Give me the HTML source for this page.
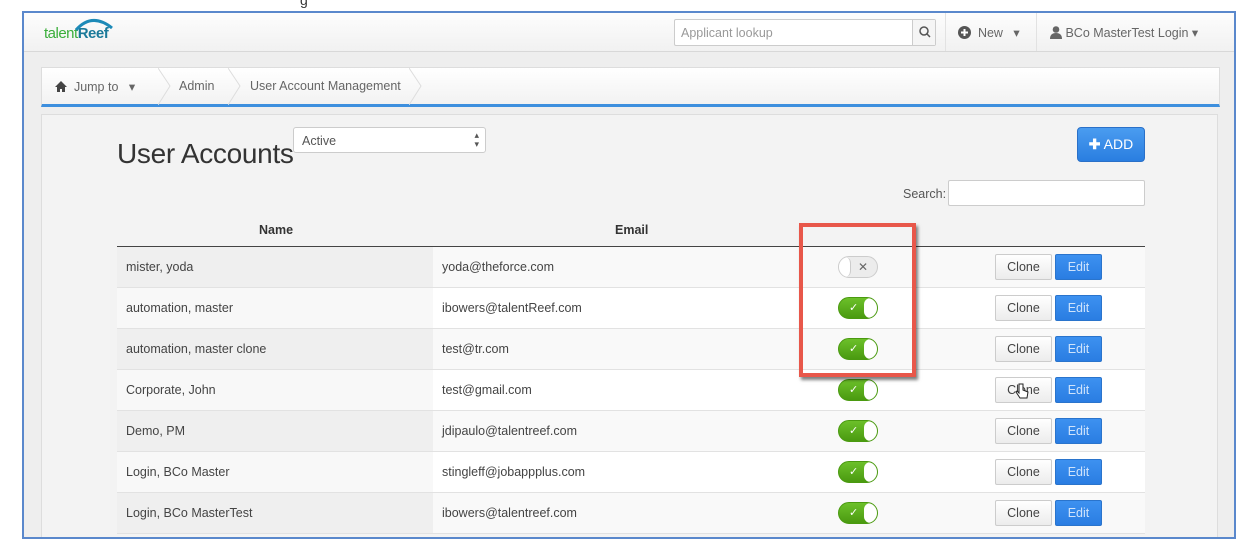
<!DOCTYPE html>
<html><head><meta charset="utf-8"><style>
*{box-sizing:border-box;margin:0;padding:0}
body{width:1252px;height:553px;background:#fff;font-family:"Liberation Sans",sans-serif;position:relative;overflow:hidden;color:#333}
.a{position:absolute}
#frame{left:22px;top:11px;width:1214px;height:528px;border:2px solid #5a88cc;background:#eeeeee;overflow:hidden}
#nav{left:0;top:0;width:1210px;height:39px;background:linear-gradient(#fdfdfd,#f1f1f1);border-bottom:1px solid #d8d8d8}
.logo{left:20px;top:12px;font-size:15px;letter-spacing:-0.5px}
.search{left:650px;top:6px;width:262px;height:27px;border:1px solid #ccc;background:#fff;border-radius:2px}
.search span{position:absolute;left:6px;top:6px;font-size:12.5px;color:#999}
.search .btn{position:absolute;right:0;top:0;width:23px;height:25px;border-left:1px solid #ccc;background:#f5f5f5}
.navitem{font-size:12.5px;color:#666;top:12px}
.sep{top:0;width:1px;height:38px;background:#e2e2e2}
#bc{left:17px;top:54px;width:1179px;height:40px;background:linear-gradient(#fff,#f2f2f2);border:1px solid #ddd;border-bottom:3px solid #3d8fde}
.bct{font-size:12.5px;color:#666;top:11px}
.chev{top:0;width:14px;height:37px}
#panel{left:17px;top:101px;width:1177px;height:430px;background:#f3f3f3;border:1px solid #ddd}
h1{position:absolute;left:75px;top:23px;font-size:28px;font-weight:normal;color:#333;letter-spacing:-0.3px}
.sel{left:251px;top:12px;width:193px;height:26px;background:#fff;border:1px solid #ccc;border-radius:3px;font-size:12.5px;color:#555;padding:6px 8px}
.add{left:1035px;top:12px;width:68px;height:35px;background:linear-gradient(#4a9cf0,#2a7ee0);border:1px solid #2a70c8;border-radius:4px;color:#fff;font-size:14px;text-align:center;line-height:33px}
.srch{left:861px;top:72px;font-size:12.5px;color:#555}
.sbox{left:906px;top:65px;width:197px;height:26px;background:#fff;border:1px solid #ccc;border-radius:2px}
.th{top:108px;font-size:12.5px;font-weight:bold;color:#333}
.hline{left:75px;top:131px;width:1028px;height:1px;background:#444}
.row{left:75px;width:1028px;height:41px;border-bottom:1px solid #e2e2e2}
.row .n{position:absolute;left:0;top:0;width:316px;height:40px}
.row .t1{position:absolute;left:9px;top:13px;font-size:12.5px;color:#444}
.row .t2{position:absolute;left:325px;top:13px;font-size:12.5px;color:#444}
.tg{position:absolute;left:721px;top:9px;width:40px;height:22px;border-radius:11px;overflow:hidden}
.on{background:linear-gradient(#6cc02a,#4a9a10);border:1px solid #4a9a10}
.on i{position:absolute;right:0;top:0;width:13px;height:20px;border-radius:10px;background:#fff}
.on span{position:absolute;left:10px;top:3px;color:#fff;font-size:11px}
.off{background:#ececec;border:1px solid #ccc}
.off i{position:absolute;left:0;top:0;width:12px;height:20px;border-radius:10px;background:#fff;border-right:1px solid #ccc}
.off span{position:absolute;left:19px;top:3px;color:#666;font-size:12px}
.cl{position:absolute;left:878px;top:7px;width:57px;height:26px;background:linear-gradient(#fff,#ececec);border:1px solid #ccc;border-radius:2px;font-size:12.5px;color:#444;text-align:center;line-height:24px}
.ed{position:absolute;left:938px;top:7px;width:47px;height:26px;background:linear-gradient(#3d91f0,#2a7de2);border:1px solid #2a74cc;border-radius:2px;font-size:12.5px;color:#cfe3fb;text-align:center;line-height:24px}
#red{left:799px;top:223px;width:117px;height:154px;border:4px solid #e8574a;box-shadow:2px 3px 3px rgba(0,0,0,.5)}
</style></head><body>
<div class="a" style="left:300px;top:-8px;font-size:14px;color:#333">g</div>
<div class="a" id="frame">
 <div class="a" id="nav">
  <div class="a logo"><span style="color:#3aae3a">talent</span><span style="color:#1b7a9a;font-weight:bold">Reef</span>
   <svg class="a" style="left:30px;top:-9px" width="40" height="16"><path d="M2 14 Q18 -4 38 12" stroke="#1d8ab8" stroke-width="3" fill="none"/></svg></div>
  <div class="a search"><span>Applicant lookup</span><div class="btn"><svg width="23" height="25"><circle cx="11" cy="11" r="4" stroke="#555" stroke-width="1.5" fill="none"/><line x1="14" y1="14" x2="17" y2="17" stroke="#555" stroke-width="1.5"/></svg></div></div>
  <div class="a sep" style="left:921px"></div>
  <div class="a navitem" style="left:934px"><svg width="13" height="13" style="vertical-align:-2px"><circle cx="6.5" cy="6.5" r="6.5" fill="#555"/><path d="M6.5 3v7M3 6.5h7" stroke="#fff" stroke-width="2"/></svg>&nbsp; New &nbsp;&nbsp;▾</div>
  <div class="a sep" style="left:1012px"></div>
  <div class="a navitem" style="left:1026px"><svg width="12" height="13" style="vertical-align:-2px"><circle cx="6" cy="3.5" r="3.3" fill="#666"/><path d="M0 13 Q0 7 6 7 Q12 7 12 13Z" fill="#666"/></svg> BCo MasterTest Login ▾</div>
 </div>
 <div class="a" id="bc">
  <div class="a bct" style="left:13px"><svg width="12" height="11" style="vertical-align:-1px"><path d="M6 0L0 6h2v5h3V8h2v3h3V6h2z" fill="#444"/></svg>&nbsp; Jump to &nbsp;&nbsp;▾</div>
  <svg class="a chev" style="left:116px"><path d="M0 0L12 18L0 37" stroke="#ddd" fill="none"/></svg>
  <div class="a bct" style="left:137px">Admin</div>
  <svg class="a chev" style="left:186px"><path d="M0 0L12 18L0 37" stroke="#ddd" fill="none"/></svg>
  <div class="a bct" style="left:208px">User Account Management</div>
  <svg class="a chev" style="left:367px"><path d="M0 0L12 18L0 37" stroke="#ddd" fill="none"/></svg>
 </div>
 <div class="a" id="panel">
  <h1>User Accounts</h1>
  <div class="a sel">Active<span style="position:absolute;right:6px;top:3px;font-size:9px;line-height:9px">▴<br>▾</span></div>
  <div class="a add"><b>✚</b> ADD</div>
  <div class="a srch">Search:</div>
  <div class="a sbox"></div>
  <div class="a th" style="left:217px">Name</div>
  <div class="a th" style="left:573px">Email</div>
  <div class="a hline"></div>
  <div class="a row" style="top:132px;background:#f9f9f9"><div class="n" style="background:#efefef"></div><div class="t1">mister, yoda</div><div class="t2">yoda@theforce.com</div><div class="tg off"><i></i><span>✕</span></div><div class="cl">Clone</div><div class="ed">Edit</div></div>
  <div class="a row" style="top:173px;background:#fff"><div class="n" style="background:#f8f8f8"></div><div class="t1">automation, master</div><div class="t2">ibowers@talentReef.com</div><div class="tg on"><i></i><span>✓</span></div><div class="cl">Clone</div><div class="ed">Edit</div></div>
  <div class="a row" style="top:214px;background:#f9f9f9"><div class="n" style="background:#efefef"></div><div class="t1">automation, master clone</div><div class="t2">test@tr.com</div><div class="tg on"><i></i><span>✓</span></div><div class="cl">Clone</div><div class="ed">Edit</div></div>
  <div class="a row" style="top:255px;background:#fff"><div class="n" style="background:#f8f8f8"></div><div class="t1">Corporate, John</div><div class="t2">test@gmail.com</div><div class="tg on"><i></i><span>✓</span></div><div class="cl">Clone</div><div class="ed">Edit</div></div>
  <div class="a row" style="top:296px;background:#f9f9f9"><div class="n" style="background:#efefef"></div><div class="t1">Demo, PM</div><div class="t2">jdipaulo@talentreef.com</div><div class="tg on"><i></i><span>✓</span></div><div class="cl">Clone</div><div class="ed">Edit</div></div>
  <div class="a row" style="top:337px;background:#fff"><div class="n" style="background:#f8f8f8"></div><div class="t1">Login, BCo Master</div><div class="t2">stingleff@jobappplus.com</div><div class="tg on"><i></i><span>✓</span></div><div class="cl">Clone</div><div class="ed">Edit</div></div>
  <div class="a row" style="top:378px;background:#f9f9f9"><div class="n" style="background:#efefef"></div><div class="t1">Login, BCo MasterTest</div><div class="t2">ibowers@talentreef.com</div><div class="tg on"><i></i><span>✓</span></div><div class="cl">Clone</div><div class="ed">Edit</div></div>
 </div>
</div>
<div class="a" id="red"></div>
<svg class="a" style="left:1015px;top:383px" width="14" height="18"><path d="M4 1v9l-2-2-1 1 4 6h7l1-6-5-2V1z" fill="#fff" stroke="#222" stroke-width="1"/></svg>
</body></html>
